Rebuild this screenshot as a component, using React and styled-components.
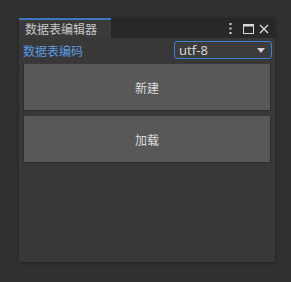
import React from "react";
import styled, { createGlobalStyle } from "styled-components";

const GlobalStyle = createGlobalStyle`
  html, body {
    margin: 0;
    padding: 0;
    background: #313131;
    font-family: "Noto Sans CJK SC", "Noto Sans", sans-serif;
  }
`;

const Page = styled.div`
  width: 291px;
  height: 282px;
  padding: 18px 0 0 19px;
  box-sizing: border-box;
`;

const Panel = styled.div`
  width: 256px;
  height: 244px;
  background: #383838;
  box-shadow: 0 1px 4px rgba(0, 0, 0, 0.35);
  display: flex;
  flex-direction: column;
`;

const TitleBar = styled.div`
  height: 20px;
  background: #282828;
  display: flex;
  align-items: stretch;
`;

const Tab = styled.div`
  width: 92px;
  box-sizing: border-box;
  background: #3a3a3a;
  border-top: 2px solid #3a78c0;
  color: #c8c8c8;
  font-size: 12px;
  line-height: 17px;
  padding-left: 6px;
  white-space: nowrap;
`;

const Tools = styled.div`
  margin-left: auto;
  display: flex;
  align-items: center;
  padding-right: 6px;
  padding-top: 1px;
`;

const ToolIcon = styled.svg`
  display: block;
  fill: none;
  stroke: #d8d8d8;
  margin-left: ${(p) => p.$gap || 0}px;
`;

const Content = styled.div`
  padding: 3px 4px 0 4px;
  display: flex;
  flex-direction: column;
  gap: 4px;
`;

const Row = styled.div`
  display: flex;
  align-items: center;
  justify-content: space-between;
  height: 18px;
`;

const Label = styled.div`
  color: #5b9be3;
  font-size: 12px;
  line-height: 18px;
  padding-top: 2px;
`;

const Combo = styled.div`
  width: 98px;
  height: 18px;
  box-sizing: border-box;
  border: 1px solid #3d82d0;
  border-radius: 3px;
  background: #3c3c3c;
  display: flex;
  align-items: center;
  justify-content: space-between;
  padding: 0 6px 0 4px;
  margin-right: -1px;
  color: #d4d4d4;
  font-size: 13px;
  font-family: "Noto Sans", sans-serif;
`;

const Arrow = styled.div`
  width: 0;
  height: 0;
  border-left: 4px solid transparent;
  border-right: 4px solid transparent;
  border-top: 5px solid #d0d0d0;
`;

const Button = styled.div`
  height: 48px;
  box-sizing: border-box;
  background: #585858;
  border: 1px solid #2c2c2c;
  border-top-color: #3a3a3a;
  border-radius: 2px;
  display: flex;
  align-items: center;
  justify-content: center;
  color: #dcdcdc;
  font-size: 12px;
`;

export default function App() {
  return (
    <>
      <GlobalStyle />
      <Page>
        <Panel>
          <TitleBar>
            <Tab>数据表编辑器</Tab>
            <Tools>
              <ToolIcon width="3" height="11" viewBox="0 0 3 11">
                <rect x="0.5" y="0" width="2" height="2" fill="#d8d8d8" stroke="none" />
                <rect x="0.5" y="4.5" width="2" height="2" fill="#d8d8d8" stroke="none" />
                <rect x="0.5" y="9" width="2" height="2" fill="#d8d8d8" stroke="none" />
              </ToolIcon>
              <ToolIcon $gap={11} width="11" height="10" viewBox="0 0 11 10">
                <rect x="0.5" y="0.5" width="10" height="9" strokeWidth="1" />
                <line x1="0" y1="1.5" x2="11" y2="1.5" strokeWidth="2" />
              </ToolIcon>
              <ToolIcon $gap={5} width="10" height="10" viewBox="0 0 10 10">
                <path d="M1 1 L9 9 M9 1 L1 9" strokeWidth="1.4" />
              </ToolIcon>
            </Tools>
          </TitleBar>
          <Content>
            <Row>
              <Label>数据表编码</Label>
              <Combo>
                <span>utf-8</span>
                <Arrow />
              </Combo>
            </Row>
            <Button>新建</Button>
            <Button>加载</Button>
          </Content>
        </Panel>
      </Page>
    </>
  );
}
